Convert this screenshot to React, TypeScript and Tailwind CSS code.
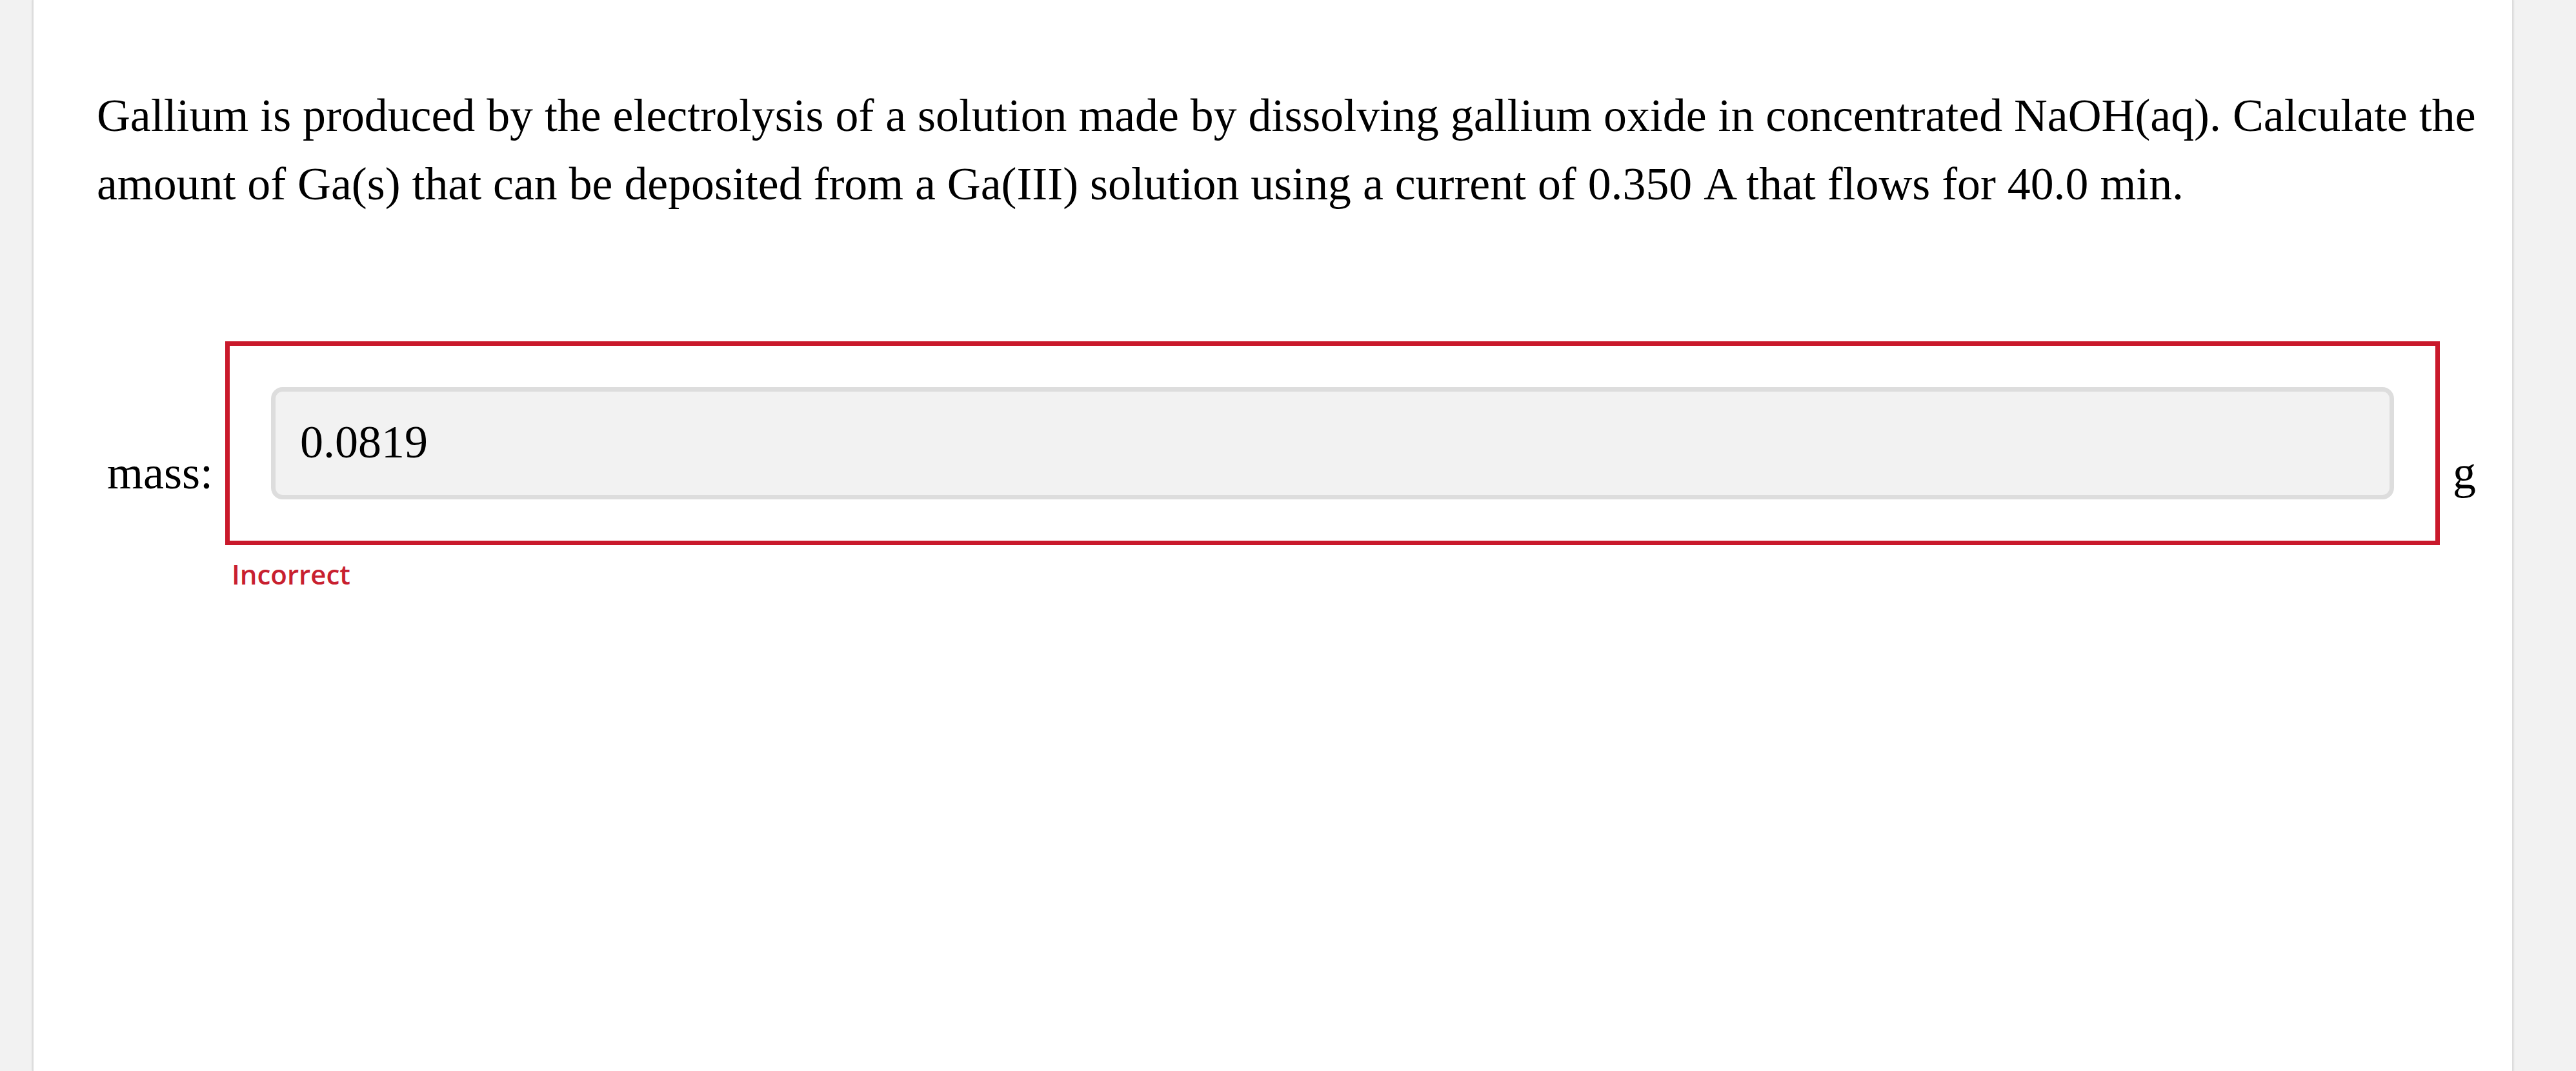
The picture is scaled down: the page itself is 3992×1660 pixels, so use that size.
import React from "react";

export default function App() {
  return (
    <div className="min-h-[1660px] w-full bg-[#f2f2f2] flex">
      <div
        className="ml-[50px] w-[3845px] min-h-[1660px] bg-white border-x-[2px] border-[#dcdcdc] shadow-[0_0_3px_rgba(0,0,0,0.12)] pl-[98px] pr-[40px] pt-[126px]"
        style={{ fontFamily: '"Liberation Serif", "Times New Roman", serif' }}
      >
        <p className="text-[71.8px] leading-[106px] text-black m-0">
          Gallium is produced by the electrolysis of a solution made by dissolving gallium oxide in concentrated NaOH(aq). Calculate the amount of Ga(s) that can be deposited from a Ga(III) solution using a current of 0.350&nbsp;A that flows for 40.0&nbsp;min.
        </p>

        <div className="mt-[191px] flex items-start">
          <div className="w-[199px] pr-[19px] text-right mt-[151px] text-[72px] leading-[106px] text-black">
            mass:
          </div>
          <div className="flex flex-col">
            <div className="w-[3432px] h-[316px] border-[7px] border-[#c9192b] p-[64px] box-border">
              <div className="h-[174px] box-border border-[7px] border-[#dddddd] bg-[#f2f2f2] rounded-[18px] pl-[38px] pt-[25px] text-[72px] leading-[106px] text-black">
                0.0819
              </div>
            </div>
            <div
              className="ml-[10px] mt-[16px] text-[42px] leading-[57px] font-semibold text-[#c8202f]"
              style={{ fontFamily: '"Open Sans", "Noto Sans", sans-serif' }}
            >
              Incorrect
            </div>
          </div>
          <div className="ml-[20px] mt-[151px] text-[72px] leading-[106px] text-black">
            g
          </div>
        </div>
      </div>
    </div>
  );
}
